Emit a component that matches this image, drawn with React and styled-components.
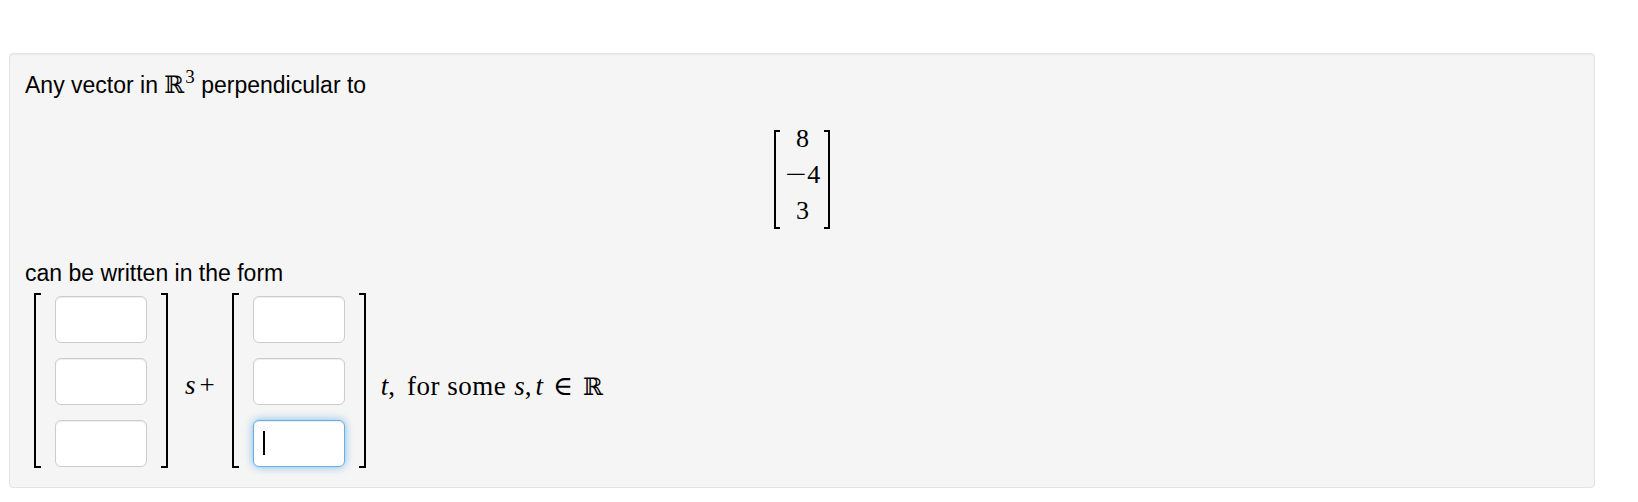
import React from 'react';
import styled, { createGlobalStyle, css } from 'styled-components';

const GlobalStyle = createGlobalStyle`
  html, body {
    margin: 0;
    padding: 0;
    background: #fff;
  }
  body {
    font-family: "Liberation Sans", Arial, sans-serif;
    color: #000;
  }
`;

const Panel = styled.div`
  box-sizing: border-box;
  width: 1586px;
  margin: 53px 0 0 9px;
  padding: 16px 15px 19px 15px;
  background-color: #f5f5f5;
  border: 1px solid #e3e3e3;
  border-radius: 4px;
  box-shadow: inset 0 1px 1px rgba(0, 0, 0, 0.05);
`;

const Para = styled.p`
  margin: 0;
  font-size: 23px;
  line-height: 31px;
`;

const MathSpan = styled.span`
  font-family: "Liberation Serif", "DejaVu Serif", "Times New Roman", serif;
  font-size: 26px;
  line-height: 1;
`;

const Sup = styled.sup`
  font-family: "Liberation Serif", serif;
  font-size: 19px;
  line-height: 0;
  vertical-align: 0;
  position: relative;
  top: -10px;
  margin-left: 1px;
`;

const Display = styled.div`
  display: flex;
  justify-content: center;
  margin: 29px 0 29px 0;
`;

const Matrix = styled.div`
  display: flex;
  align-items: stretch;
  margin-left: ${(p) => p.$ml || 0}px;
`;

const Bracket = styled.div`
  width: ${(p) => p.$w || 7}px;
  border-top: 2px solid #000;
  border-bottom: 2px solid #000;
  ${(p) =>
    p.$side === 'left'
      ? css`border-left: 2px solid #000;`
      : css`border-right: 2px solid #000;`}
  box-sizing: border-box;
`;

const NumberColumn = styled.div`
  display: flex;
  flex-direction: column;
  margin: -9px 0 0 0;
  padding: 0 4px 0 5px;
  font-family: "Liberation Serif", "DejaVu Serif", serif;
  font-size: 26px;
  line-height: 36px;
  text-align: center;
`;

const Cell = styled.div`
  white-space: nowrap;
`;

const Minus = styled.span`
  display: inline-block;
  transform: scaleX(1.45);
  transform-origin: right center;
  margin-left: 7px;
  margin-right: 1px;
`;

const FormRow = styled.div`
  display: flex;
  align-items: center;
  margin: 4px 0 0 9px;
`;

const InputColumn = styled.div`
  display: flex;
  flex-direction: column;
  gap: 15px;
  padding: 3px 14px 1px 14px;
`;

const InputWrap = styled.div`
  position: relative;
  width: 92px;
  height: 47px;
`;

const Field = styled.input`
  box-sizing: border-box;
  width: 100%;
  height: 100%;
  margin: 0;
  padding: 6px 10px;
  background: #fff;
  border: 1px solid ${(p) => (p.$focused ? '#66afe9' : '#cccccc')};
  border-radius: 6px;
  outline: none;
  font-size: 20px;
  box-shadow: ${(p) =>
    p.$focused
      ? 'inset 0 1px 1px rgba(0,0,0,.075), 0 0 9px rgba(102,175,233,.85)'
      : 'inset 0 1px 1px rgba(0,0,0,.075)'};
`;

const Caret = styled.span`
  position: absolute;
  left: 10px;
  top: 11px;
  width: 2px;
  height: 24px;
  background: #000;
`;

const Inline = styled.span`
  display: flex;
  align-items: baseline;
  font-family: "Liberation Serif", "DejaVu Serif", serif;
  font-size: 27px;
  margin-left: ${(p) => p.$ml || 0}px;
  margin-top: 10px;
  white-space: nowrap;
`;

const Var = styled.i`
  font-style: italic;
`;

const Piece = styled.span`
  margin-left: ${(p) => p.$ml || 0}px;
  letter-spacing: ${(p) => p.$ls || 0}px;
`;

const Blackboard = styled.span`
  font-family: "DejaVu Serif", serif;
  font-size: 24px;
`;

function InputMatrix({ focusedIndex, ml }) {
  return (
    <Matrix $ml={ml}>
      <Bracket $side="left" />
      <InputColumn>
        {[0, 1, 2].map((i) => (
          <InputWrap key={i}>
            <Field type="text" $focused={i === focusedIndex} readOnly />
            {i === focusedIndex && <Caret />}
          </InputWrap>
        ))}
      </InputColumn>
      <Bracket $side="right" />
    </Matrix>
  );
}

export default function App() {
  return (
    <>
      <GlobalStyle />
      <Panel>
        <Para>
          Any vector in{' '}
          <MathSpan>
            <Blackboard>ℝ</Blackboard>
            <Sup>3</Sup>
          </MathSpan>{' '}
          perpendicular to
        </Para>
        <Display>
          <Matrix>
            <Bracket $side="left" $w={6} />
            <NumberColumn>
              <Cell>8</Cell>
              <Cell>
                <Minus>−</Minus>4
              </Cell>
              <Cell>3</Cell>
            </NumberColumn>
            <Bracket $side="right" $w={6} />
          </Matrix>
        </Display>
        <Para>can be written in the form</Para>
        <FormRow>
          <InputMatrix focusedIndex={-1} />
          <Inline $ml={17}>
            <Var>s</Var>
            <Piece $ml={4}>+</Piece>
          </Inline>
          <InputMatrix focusedIndex={2} ml={17} />
          <Inline $ml={15}>
            <Var>t</Var>
            <span>,</span>
            <Piece $ml={12} $ls={0.5}>
              for some
            </Piece>
            <Piece $ml={8}>
              <Var>s</Var>
            </Piece>
            <span>,</span>
            <Piece $ml={4}>
              <Var>t</Var>
            </Piece>
            <Piece $ml={10}>∈</Piece>
            <Piece $ml={10}>
              <Blackboard>ℝ</Blackboard>
            </Piece>
          </Inline>
        </FormRow>
      </Panel>
    </>
  );
}
